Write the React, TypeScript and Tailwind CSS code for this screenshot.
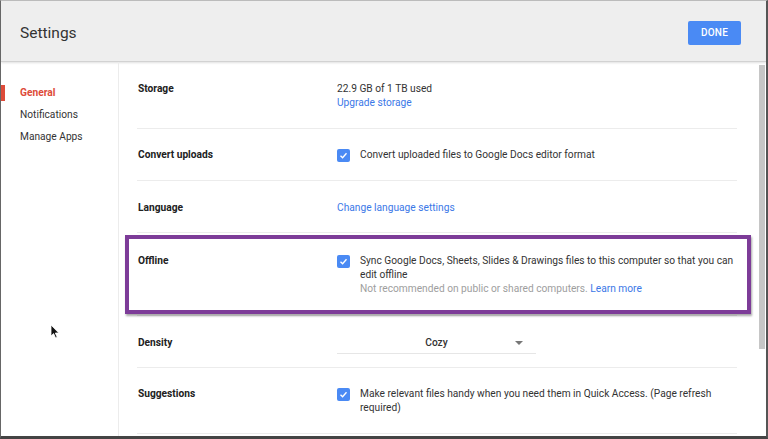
import { ReactNode } from "react";

const font = "font-['Roboto','Liberation_Sans',sans-serif]";

function Check() {
    return (
        <span className="mt-[1px] mr-[10px] flex h-[13px] w-[13px] shrink-0 items-center justify-center rounded-[2px] bg-[#4a8af4]">
            <svg width="9" height="9" viewBox="0 0 12 12">
                <path d="M2 6.2 L4.8 9 L10 3" fill="none" stroke="#fff" strokeWidth="1.8" />
            </svg>
        </span>
    );
}

function Row({ label, children, pad = "pt-[19px] pb-[18px]" }: { label: string; children: ReactNode; pad?: string }) {
    return (
        <div className={`flex items-start border-b border-[#ececec] ${pad}`}>
            <div className="w-[200px] shrink-0 pl-[1px] text-[10.2px] font-bold text-[#212121]">{label}</div>
            <div className="flex-1 text-[10.2px] text-[#333]">{children}</div>
        </div>
    );
}

export default function App() {
    return (
        <div className={`relative flex h-[439px] w-[768px] flex-col overflow-hidden border-t border-l border-r-2 border-b-[3px] border-t-[#bbb] border-l-[#666] border-r-[#555] border-b-[#444] bg-white leading-[14px] ${font}`}>
            {/* header */}
            <div className="flex h-[61px] shrink-0 items-center justify-between border-b border-[#d2d2d2] bg-[#eeeeee] pt-[3px] pl-[19px] pr-[25px] shadow-[0_1px_2px_rgba(0,0,0,0.12)]">
                <span className="text-[15.5px] text-[#333]">Settings</span>
                <button className="h-[24px] w-[53px] rounded-[2px] bg-[#4a8af4] text-[10px] font-medium tracking-[0.02em] text-white">
                    DONE
                </button>
            </div>

            <div className="flex min-h-0 flex-1">
                {/* sidebar */}
                <div className="w-[118px] shrink-0 border-r border-[#ececec] pt-[23px] text-[10.2px] text-[#333]">
                    <div className="flex h-[16px] items-center">
                        <span className="h-[16px] w-[4px] bg-[#dd4b39]" />
                        <span className="ml-[15px] font-bold text-[#dd4b39]">General</span>
                    </div>
                    <div className="mt-[6px] flex h-[16px] items-center pl-[19px]">Notifications</div>
                    <div className="mt-[6px] flex h-[16px] items-center pl-[19px]">Manage Apps</div>
                </div>

                {/* content */}
                <div className="min-w-0 flex-1 pl-[18px] pr-[21px]">
                    <Row label="Storage" pad="pt-[20px] pb-[18px]">
                        <div>22.9 GB of 1 TB used</div>
                        <div className="text-[#3b78e7]">Upgrade storage</div>
                    </Row>
                    <Row label="Convert uploads">
                        <div className="flex items-start">
                            <Check />
                            <span>Convert uploaded files to Google Docs editor format</span>
                        </div>
                    </Row>
                    <Row label="Language" pad="pt-[20px] pb-[17px]">
                        <span className="text-[#3b78e7]">Change language settings</span>
                    </Row>
                    <div className="relative">
                        <div className="pointer-events-none absolute top-[2px] bottom-[2px] -left-[12px] -right-[14px] border-4 border-[#7d3c98] shadow-[1px_2px_2px_rgba(0,0,0,0.35)]" />
                        <Row label="Offline" pad="pt-[21px] pb-[19px]">
                            <div className="flex items-start">
                                <Check />
                                <div>
                                    <div>Sync Google Docs, Sheets, Slides &amp; Drawings files to this computer so that you can edit offline</div>
                                    <div className="text-[#9e9e9e]">
                                        Not recommended on public or shared computers. <span className="text-[#3b78e7]">Learn more</span>
                                    </div>
                                </div>
                            </div>
                        </Row>
                    </div>
                    <Row label="Density" pad="pt-[20px] pb-[17px]">
                        <div className="relative -mt-[2px] -mb-[4px] flex h-[20px] w-[199px] items-start justify-center border-b border-[#e6e6e6] pt-[2px]">
                            <span className="font-medium text-[#333]">Cozy</span>
                            <span className="absolute right-[13px] top-[7px] h-0 w-0 border-x-[4px] border-t-[4px] border-x-transparent border-t-[#777]" />
                        </div>
                    </Row>
                    <Row label="Suggestions">
                        <div className="flex items-start">
                            <Check />
                            <span>Make relevant files handy when you need them in Quick Access. (Page refresh required)</span>
                        </div>
                    </Row>
                </div>

                {/* scrollbar */}
                <div className="w-[8px] shrink-0 pt-[3px]">
                    <div className="ml-[1px] h-[284px] w-[6px] bg-[#c6c6c6]" />
                </div>
            </div>

            {/* mouse pointer */}
            <svg className="absolute left-[49px] top-[323px]" width="10" height="15" viewBox="0 0 10 15">
                <path d="M1 1 L1 12 L3.6 9.6 L5.6 14 L7.2 13.3 L5.3 9 L8.8 9 Z" fill="#111" stroke="#fff" strokeWidth="0.8" />
            </svg>
        </div>
    );
}
